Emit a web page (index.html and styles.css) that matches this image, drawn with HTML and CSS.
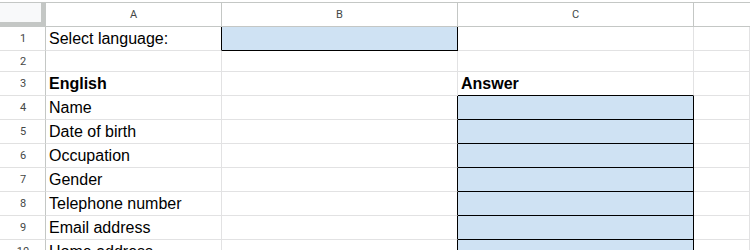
FILE: index.html
```html
<!DOCTYPE html>
<html>
<head>
<meta charset="utf-8">
<link rel="stylesheet" href="styles.css">
</head>
<body>
<div class="sheet">
  <div class="corner"></div>
  <div class="colhead">A</div>
  <div class="colhead">B</div>
  <div class="colhead">C</div>
  <div class="colhead last"></div>

  <div class="rowhead">1</div>
  <div class="cell edge-r">Select language:</div>
  <div class="cell fill edge-r edge-b"></div>
  <div class="cell"></div>
  <div class="cell"></div>

  <div class="rowhead">2</div>
  <div class="cell"></div>
  <div class="cell"></div>
  <div class="cell"></div>
  <div class="cell"></div>

  <div class="rowhead">3</div>
  <div class="cell bold">English</div>
  <div class="cell"></div>
  <div class="cell bold edge-b">Answer</div>
  <div class="cell"></div>

  <div class="rowhead">4</div>
  <div class="cell">Name</div>
  <div class="cell edge-r"></div>
  <div class="cell fill edge-r edge-b"></div>
  <div class="cell"></div>

  <div class="rowhead">5</div>
  <div class="cell">Date of birth</div>
  <div class="cell edge-r"></div>
  <div class="cell fill edge-r edge-b"></div>
  <div class="cell"></div>

  <div class="rowhead">6</div>
  <div class="cell">Occupation</div>
  <div class="cell edge-r"></div>
  <div class="cell fill edge-r edge-b"></div>
  <div class="cell"></div>

  <div class="rowhead">7</div>
  <div class="cell">Gender</div>
  <div class="cell edge-r"></div>
  <div class="cell fill edge-r edge-b"></div>
  <div class="cell"></div>

  <div class="rowhead">8</div>
  <div class="cell">Telephone number</div>
  <div class="cell edge-r"></div>
  <div class="cell fill edge-r edge-b"></div>
  <div class="cell"></div>

  <div class="rowhead">9</div>
  <div class="cell">Email address</div>
  <div class="cell edge-r"></div>
  <div class="cell fill edge-r edge-b"></div>
  <div class="cell"></div>

  <div class="rowhead">10</div>
  <div class="cell">Home address</div>
  <div class="cell edge-r"></div>
  <div class="cell fill edge-r edge-b"></div>
  <div class="cell"></div>
</div>
</body>
</html>
```

FILE: styles.css
```css
html, body {
  margin: 0;
  padding: 0;
  background: #ffffff;
  height: 250px;
  overflow: hidden;
}

.sheet {
  margin-top: 2px;
  border-top: 1px solid #c4c7c5;
  display: grid;
  grid-template-columns: 46px 176px 236px 236px 1fr;
  grid-template-rows: 24px 24px 21px repeat(8, 24px);
  font-family: "Liberation Sans", Arial, sans-serif;
}

.corner {
  box-sizing: border-box;
  background: #f8f9fa;
  border-right: 5px solid #c4c7c5;
  border-bottom: 5px solid #c4c7c5;
}

.colhead {
  box-sizing: border-box;
  border-right: 1px solid #c4c7c5;
  border-bottom: 1px solid #c4c7c5;
  display: flex;
  align-items: center;
  justify-content: center;
  font-family: Roboto, "Liberation Sans", sans-serif;
  font-size: 11px;
  color: #444746;
}

.colhead.last {
  border-right: none;
}

.rowhead {
  box-sizing: border-box;
  border-right: 1px solid #c4c7c5;
  border-bottom: 1px solid #e1e1e1;
  display: flex;
  align-items: center;
  justify-content: center;
  font-family: Roboto, "Liberation Sans", sans-serif;
  font-size: 11px;
  color: #444746;
  padding-left: 1px;
}

.cell {
  box-sizing: border-box;
  border-right: 1px solid #e2e2e3;
  border-bottom: 1px solid #e2e2e3;
  display: flex;
  align-items: flex-end;
  padding: 0 3px 2px 3px;
  font-size: 16px;
  line-height: 18px;
  color: #000000;
  white-space: nowrap;
  overflow: hidden;
}

.bold {
  font-weight: bold;
}

.fill {
  background: #cfe2f3;
}

.edge-r {
  border-right-color: #000000;
}

.edge-b {
  border-bottom-color: #000000;
}
```
